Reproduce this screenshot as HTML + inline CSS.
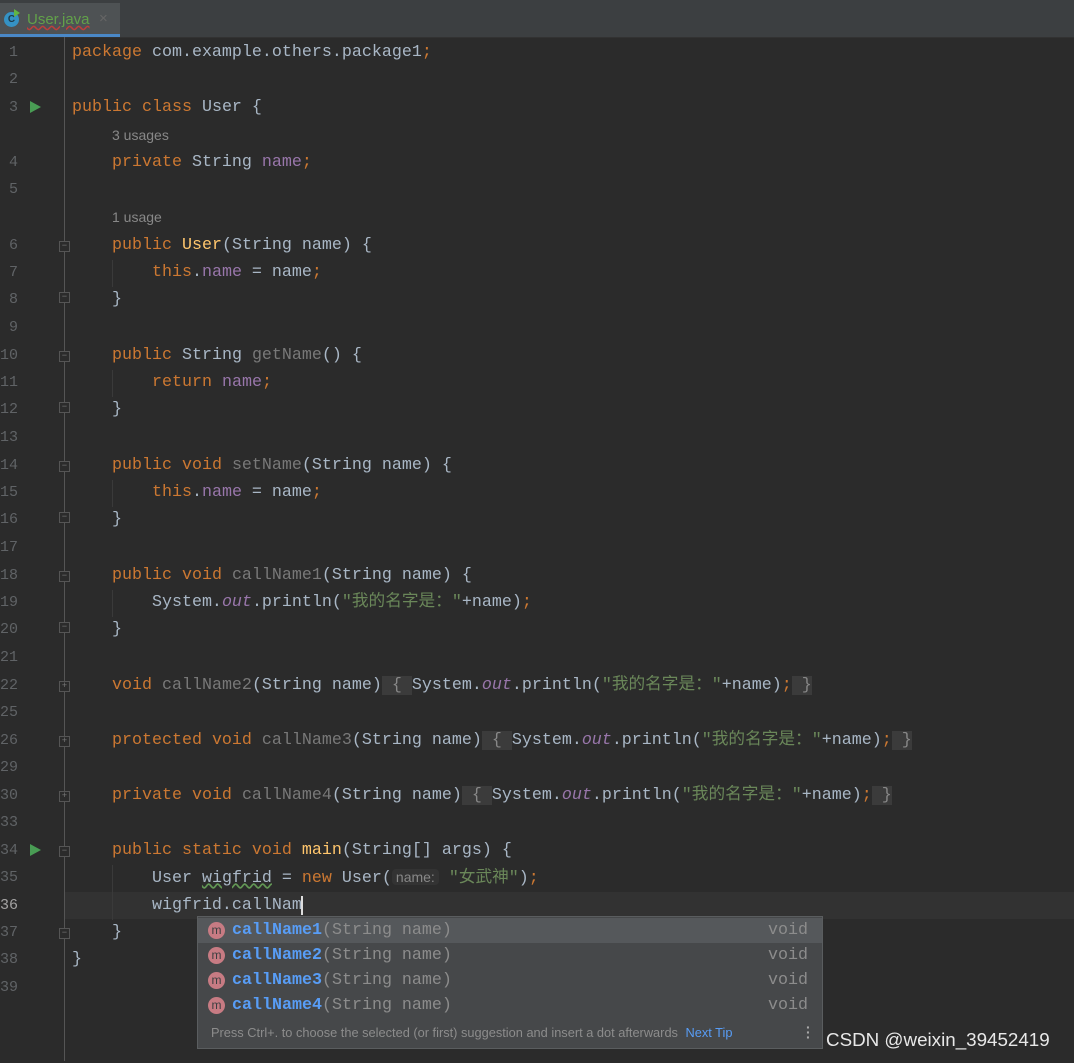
<!DOCTYPE html>
<html><head><meta charset="utf-8"><style>
body{margin:0;width:1074px;height:1061px;background:#2b2b2b;overflow:hidden;position:relative;font-family:"Liberation Mono","Noto Sans CJK SC",monospace;font-size:16.67px;color:#a9b7c6}
.tabbar{position:absolute;left:0;top:0;width:1074px;height:37px;background:#3c3f41;border-bottom:1px solid #323232}
.tab{position:absolute;left:0;top:3px;width:120px;height:34px;background:#4e5254}
.tab .ul{position:absolute;left:0;bottom:0;width:120px;height:3px;background:#4a88c7}
.sep{position:absolute;left:64px;top:37px;width:1px;height:1024px;background:#555}
.cur{position:absolute;left:65px;top:892px;width:1009px;height:27px;background:#323232}
.w{position:absolute;left:0;top:2px;width:1074px;height:1061px}
.row{position:absolute;left:0;height:27px;line-height:27px;white-space:pre}
.ln{position:absolute;left:0;width:18px;text-align:right;color:#606366;font-size:15px}
.code{position:absolute;left:72px}
.k{color:#cc7832}.f{color:#9876aa}.m{color:#ffc66d}.g{color:#787878}.s{color:#6a8759}.o{color:#9876aa;font-style:italic}
.hint{font-family:"Liberation Sans",sans-serif;font-size:14px;color:#888}
.box{background:#3b3b3b;color:#888}
.run{position:absolute;left:30px;width:0;height:0;border-top:6px solid transparent;border-bottom:6px solid transparent;border-left:11px solid #499c54}
.fold{position:absolute;left:59px;width:9px;height:9px;border:1px solid #555;background:#2b2b2b;color:#777;font-size:9px;line-height:9px;text-align:center}
.guide{position:absolute;left:112px;width:1px;background:#3a3a3a}
.pop{position:absolute;left:197px;top:916px;width:624px;height:131px;background:#46484a;border:1px solid #5a5d5f}
.it{position:absolute;left:0;width:624px;height:25px;line-height:25px;white-space:pre}
.ic{position:absolute;left:10px;top:4px;width:17px;height:17px;border-radius:50%;background:#c77b83;color:#3c3f41;font-family:"Liberation Sans",sans-serif;font-size:12px;line-height:16px;text-align:center}
.nm{position:absolute;left:34px;color:#589df6;font-weight:bold}
.pr{color:#8c8c8c;font-weight:normal}
.vd{position:absolute;right:14px;color:#8c8c8c}
</style></head><body>
<div class="tabbar"><div class="tab">
<div style="position:absolute;left:4px;top:9px;width:15px;height:15px;border-radius:50%;background:#3592c4;color:#1e3a4a;font:bold 10px 'Liberation Sans';line-height:15px;text-align:center">C</div>
<div style="position:absolute;left:14px;top:6px;width:0;height:0;border-top:4px solid transparent;border-bottom:4px solid transparent;border-left:6px solid #62b543"></div>
<div style="position:absolute;left:27px;top:8px;font:15px 'Liberation Sans';color:#62a14a;text-decoration:underline wavy #bc3f3c">User.java</div>
<div style="position:absolute;left:99px;top:7px;font:15px 'Liberation Sans';color:#666">×</div>
<div class="ul"></div></div></div>
<div class="sep"></div>
<div class="cur"></div>
<div class="w">
<div class="guide" style="top:258px;height:27px"></div>
<div class="guide" style="top:368px;height:27px"></div>
<div class="guide" style="top:478px;height:27px"></div>
<div class="guide" style="top:588px;height:27px"></div>
<div class="guide" style="top:863px;height:55px"></div>

<div class="row" style="top:37px"><span class="ln">1</span><span class="code"><span class="k">package</span> com.example.others.package1<span class="k">;</span></span></div>
<div class="row" style="top:64px"><span class="ln">2</span></div>
<div class="row" style="top:92px"><span class="ln">3</span><span class="code"><span class="k">public class</span> User {</span></div>
<div class="run" style="top:99px"></div>
<div class="row" style="top:120px"><span class="code hint" style="left:112px">3 usages</span></div>
<div class="row" style="top:147px"><span class="ln">4</span><span class="code">    <span class="k">private</span> String <span class="f">name</span><span class="k">;</span></span></div>
<div class="row" style="top:174px"><span class="ln">5</span></div>
<div class="row" style="top:202px"><span class="code hint" style="left:112px">1 usage</span></div>
<div class="row" style="top:230px"><span class="ln">6</span><span class="code">    <span class="k">public</span> <span class="m">User</span>(String name) {</span></div>
<div class="row" style="top:257px"><span class="ln">7</span><span class="code">        <span class="k">this</span>.<span class="f">name</span> = name<span class="k">;</span></span></div>
<div class="row" style="top:284px"><span class="ln">8</span><span class="code">    }</span></div>
<div class="row" style="top:312px"><span class="ln">9</span></div>
<div class="row" style="top:340px"><span class="ln">10</span><span class="code">    <span class="k">public</span> String <span class="g">getName</span>() {</span></div>
<div class="row" style="top:367px"><span class="ln">11</span><span class="code">        <span class="k">return</span> <span class="f">name</span><span class="k">;</span></span></div>
<div class="row" style="top:394px"><span class="ln">12</span><span class="code">    }</span></div>
<div class="row" style="top:422px"><span class="ln">13</span></div>
<div class="row" style="top:450px"><span class="ln">14</span><span class="code">    <span class="k">public void</span> <span class="g">setName</span>(String name) {</span></div>
<div class="row" style="top:477px"><span class="ln">15</span><span class="code">        <span class="k">this</span>.<span class="f">name</span> = name<span class="k">;</span></span></div>
<div class="row" style="top:504px"><span class="ln">16</span><span class="code">    }</span></div>
<div class="row" style="top:532px"><span class="ln">17</span></div>
<div class="row" style="top:560px"><span class="ln">18</span><span class="code">    <span class="k">public void</span> <span class="g">callName1</span>(String name) {</span></div>
<div class="row" style="top:587px"><span class="ln">19</span><span class="code">        System.<span class="o">out</span>.println(<span class="s">"我的名字是："</span>+name)<span class="k">;</span></span></div>
<div class="row" style="top:614px"><span class="ln">20</span><span class="code">    }</span></div>
<div class="row" style="top:642px"><span class="ln">21</span></div>
<div class="row" style="top:670px"><span class="ln">22</span><span class="code">    <span class="k">void</span> <span class="g">callName2</span>(String name)<span class="box"> { </span>System.<span class="o">out</span>.println(<span class="s">"我的名字是："</span>+name)<span class="k">;</span><span class="box"> }</span></span></div>
<div class="row" style="top:697px"><span class="ln">25</span></div>
<div class="row" style="top:725px"><span class="ln">26</span><span class="code">    <span class="k">protected void</span> <span class="g">callName3</span>(String name)<span class="box"> { </span>System.<span class="o">out</span>.println(<span class="s">"我的名字是："</span>+name)<span class="k">;</span><span class="box"> }</span></span></div>
<div class="row" style="top:752px"><span class="ln">29</span></div>
<div class="row" style="top:780px"><span class="ln">30</span><span class="code">    <span class="k">private void</span> <span class="g">callName4</span>(String name)<span class="box"> { </span>System.<span class="o">out</span>.println(<span class="s">"我的名字是："</span>+name)<span class="k">;</span><span class="box"> }</span></span></div>
<div class="row" style="top:807px"><span class="ln">33</span></div>
<div class="row" style="top:835px"><span class="ln">34</span><span class="code">    <span class="k">public static void</span> <span class="m">main</span>(String[] args) {</span></div>
<div class="run" style="top:842px"></div>
<div class="row" style="top:862px"><span class="ln">35</span><span class="code">        User <span style="text-decoration:underline wavy #629755">wigfrid</span> = <span class="k">new</span> User(<span class="hint" style="background:#333;border-radius:4px;padding:0 4px">name:</span> <span class="s">"女武神"</span>)<span class="k">;</span></span></div>
<div class="row" style="top:890px"><span class="ln" style="color:#a4a3a3">36</span><span class="code">        wigfrid.callNam<span style="border-left:2px solid #ddd;margin-left:-1px"></span></span></div>
<div class="row" style="top:917px"><span class="ln">37</span><span class="code">    }</span></div>
<div class="row" style="top:944px"><span class="ln">38</span><span class="code">}</span></div>
<div class="row" style="top:972px"><span class="ln">39</span></div>

<div class="fold" style="top:239px">−</div><div class="fold" style="top:290px">−</div>
<div class="fold" style="top:349px">−</div><div class="fold" style="top:400px">−</div>
<div class="fold" style="top:459px">−</div><div class="fold" style="top:510px">−</div>
<div class="fold" style="top:569px">−</div><div class="fold" style="top:620px">−</div>
<div class="fold" style="top:679px">+</div><div class="fold" style="top:734px">+</div>
<div class="fold" style="top:789px">+</div><div class="fold" style="top:844px">−</div>
<div class="fold" style="top:926px">−</div>
</div>

<div class="pop">
<div class="it" style="top:1px;background:#55585b"><span class="ic">m</span><span class="nm">callName1<span class="pr">(String name)</span></span><span class="vd">void</span></div>
<div class="it" style="top:26px"><span class="ic">m</span><span class="nm">callName2<span class="pr">(String name)</span></span><span class="vd">void</span></div>
<div class="it" style="top:51px"><span class="ic">m</span><span class="nm">callName3<span class="pr">(String name)</span></span><span class="vd">void</span></div>
<div class="it" style="top:76px"><span class="ic">m</span><span class="nm">callName4<span class="pr">(String name)</span></span><span class="vd">void</span></div>
<div style="position:absolute;left:13px;top:108px;font:12.8px 'Liberation Sans',sans-serif;color:#8c8c8c;white-space:nowrap">Press Ctrl+. to choose the selected (or first) suggestion and insert a dot afterwards <span style="color:#589df6;margin-left:4px">Next Tip</span></div>
<div style="position:absolute;left:608px;top:108px;width:3px;color:#aaa;font:bold 14px 'Liberation Sans';line-height:5px">·<br>·<br>·</div>
</div>
<div style="position:absolute;left:826px;top:1029px;font:18.8px 'Liberation Sans',sans-serif;color:#e8e8e8">CSDN @weixin_39452419</div>
</body></html>
